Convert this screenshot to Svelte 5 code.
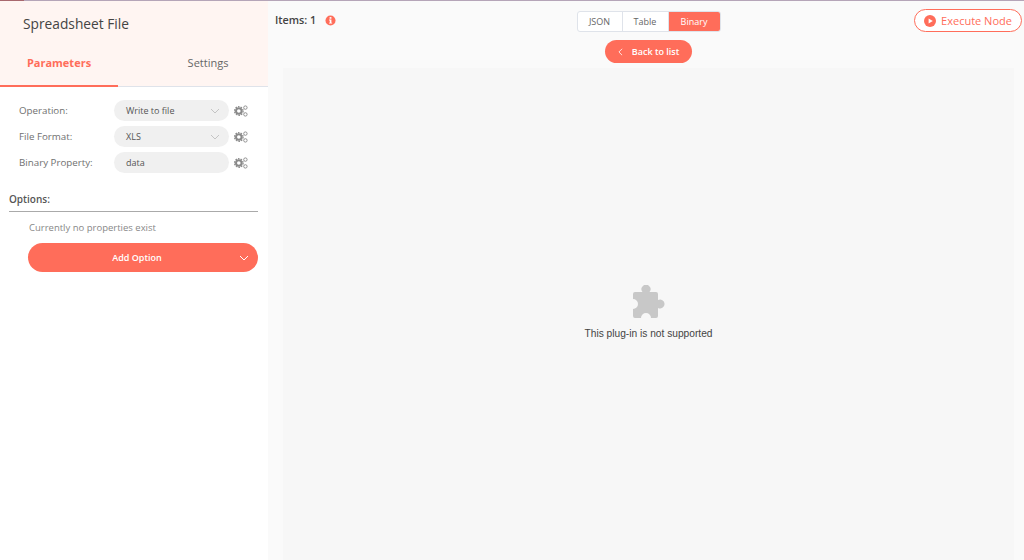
<script lang="ts">
	const params = [
		{ label: 'Operation:', value: 'Write to file', select: true },
		{ label: 'File Format:', value: 'XLS', select: true },
		{ label: 'Binary Property:', value: 'data', select: false }
	];
	const views = ['JSON', 'Table', 'Binary'];
	let view = $state('Binary');
	let tab = $state('Parameters');
</script>

{#snippet gears()}
	<svg class="gears" viewBox="0 0 14 12" width="14" height="12" aria-hidden="true">
		<circle cx="4.8" cy="6" r="2.8" fill="none" stroke="#8a8a8a" stroke-width="2" />
		<circle cx="4.8" cy="6" r="4.3" fill="none" stroke="#8a8a8a" stroke-width="1.2" stroke-dasharray="1.6 1.1" />
		<circle cx="11.4" cy="2.6" r="1.7" fill="none" stroke="#919191" stroke-width="1" />
		<circle cx="11.4" cy="9.4" r="1.7" fill="none" stroke="#919191" stroke-width="1" />
	</svg>
{/snippet}

<div class="page">
	<div class="topline"></div>
	<aside class="side">
		<header class="side-head">
			<h1>Spreadsheet File</h1>
			<nav class="tabs">
				{#each ['Parameters', 'Settings'] as t}
					<button class="tab" class:active={tab === t} onclick={() => (tab = t)}>{t}</button>
				{/each}
			</nav>
		</header>

		<div class="params">
			{#each params as p}
				<div class="param">
					<span class="param-label">{p.label}</span>
					<div class="field">
						<span>{p.value}</span>
						{#if p.select}
							<svg viewBox="0 0 10 6" width="10" height="6" aria-hidden="true">
								<path d="M1 1l4 4 4-4" fill="none" stroke="#c4c4c4" stroke-width="1" />
							</svg>
						{/if}
					</div>
					{@render gears()}
				</div>
			{/each}
		</div>

		<section class="options">
			<div class="options-title">Options:</div>
			<div class="options-body">
				<p>Currently no properties exist</p>
				<button class="add">
					<span>Add Option</span>
					<svg viewBox="0 0 10 6" width="10" height="6" aria-hidden="true">
						<path d="M1 1l4 4 4-4" fill="none" stroke="#fff" stroke-width="1" />
					</svg>
				</button>
			</div>
		</section>
	</aside>

	<main class="output">
		<div class="bar">
			<div class="items">
				<span>Items: 1</span>
				<svg viewBox="0 0 12 12" width="11" height="11" aria-hidden="true">
					<circle cx="6" cy="6" r="5.5" fill="#ff6d5a" />
					<rect x="5" y="2.3" width="2" height="1.8" fill="#fff" />
					<path d="M4.4 5h2.6v3.4h.8v1H4.4v-1h.8V6h-.8z" fill="#fff" />
				</svg>
			</div>
			<div class="center">
				<div class="switch">
					{#each views as v}
						<button class:on={view === v} onclick={() => (view = v)}>{v}</button>
					{/each}
				</div>
				<button class="back">
					<svg viewBox="0 0 6 10" width="5" height="8" aria-hidden="true">
						<path d="M5 1L1 5l4 4" fill="none" stroke="#fff" stroke-width="1" />
					</svg>
					<span>Back to list</span>
				</button>
			</div>
			<div class="right">
				<button class="execute">
					<svg viewBox="0 0 12 12" width="12" height="12" aria-hidden="true">
						<circle cx="6" cy="6" r="6" fill="#ff6d5a" />
						<path d="M4.6 3.4L8.8 6 4.6 8.6z" fill="#fff" />
					</svg>
					<span>Execute Node</span>
				</button>
			</div>
		</div>

		<div class="viewer">
			<svg class="puzzle" viewBox="0 0 34 34" width="34" height="34" aria-hidden="true">
				<path
					fill="#c8c8c8"
					d="M3 7H10.500A4.500 4.500 0 1 1 17.500 7H24a2 2 0 0 1 2 2V15A4.500 4.500 0 1 1 26 23V31a2 2 0 0 1-2 2H19A5 5 0 0 0 9 33H3a2 2 0 0 1-2-2V24A5 5 0 0 0 1 14V9a2 2 0 0 1 2-2z"
				/>
			</svg>
			<p>This plug-in is not supported</p>
		</div>
	</main>
</div>

<style>
	:global(body) {
		margin: 0;
		font-family: 'Open Sans', sans-serif;
		color: #555;
	}

	button {
		font-family: inherit;
		cursor: pointer;
	}

	.page {
		display: grid;
		grid-template-columns: 268px 1fr;
		grid-template-rows: 1px 1fr;
		width: 1024px;
		height: 560px;
		overflow: hidden;
	}

	.topline {
		grid-column: 1 / -1;
		background: linear-gradient(90deg, #a8686e 24px, #b5a5b8 24px);
	}

	.side {
		background: #fff;
	}

	.side-head {
		background: #fff5f2;
		height: 86px;
		display: flex;
		flex-direction: column;
		box-sizing: border-box;
	}

	h1 {
		margin: 0;
		padding: 13px 0 0 23px;
		font-size: 13.750px;
		line-height: 20px;
		font-weight: 400;
		color: #444;
	}

	.tabs {
		margin-top: auto;
		display: flex;
		border-bottom: 1px solid #dfe3ea;
		height: 40px;
		box-sizing: border-box;
	}

	.tab {
		flex: 1;
		background: none;
		border: 0;
		border-bottom: 2px solid transparent;
		margin-bottom: -1px;
		padding: 0 0 8px 30px;
		font-size: 11px;
		color: #666;
	}

	.tab:first-child {
		flex: none;
		width: 118px;
		padding-left: 0;
	}

	.tab.active {
		color: #ff6d5a;
		font-weight: 700;
		border-bottom-color: #ff6d5a;
	}

	.params {
		padding: 13px 0 0 19px;
		display: flex;
		flex-direction: column;
		gap: 5px;
	}

	.param {
		display: flex;
		align-items: center;
	}

	.param-label {
		width: 95px;
		flex: none;
		font-size: 9.750px;
		color: #707070;
	}

	.field {
		width: 115px;
		height: 21px;
		box-sizing: border-box;
		padding: 0 9px 0 12px;
		border-radius: 11px;
		background: #f0f0f0;
		display: flex;
		align-items: center;
		justify-content: space-between;
		font-size: 9px;
		color: #555;
	}

	.gears {
		margin-left: 5px;
	}

	.options {
		margin: 19px 10px 0 9px;
	}

	.options-title {
		font-size: 10px;
		font-weight: 600;
		line-height: 14px;
		padding-bottom: 5px;
		border-bottom: 1px solid #aaa;
		color: #555;
	}

	.options-body {
		padding-left: 19px;
	}

	.options-body p {
		margin: 0;
		padding: 9px 0 0 1px;
		font-size: 9.500px;
		line-height: 14px;
		color: #888;
	}

	.add {
		margin-top: 8px;
		width: 100%;
		height: 29px;
		border: 0;
		border-radius: 15px;
		background: #ff6d5a;
		color: #fff;
		font-size: 9px;
		font-weight: 600;
		position: relative;
		padding: 0 12px 0 0;
	}

	.add svg {
		position: absolute;
		right: 9px;
		top: 12px;
	}

	.output {
		min-width: 0;
		background: #fafafa;
		display: flex;
		flex-direction: column;
	}

	.bar {
		height: 67px;
		flex: none;
		display: grid;
		grid-template-columns: 1fr auto 1fr;
		align-items: start;
	}

	.items {
		display: flex;
		align-items: center;
		gap: 9px;
		padding: 12px 0 0 7px;
		font-size: 10.800px;
		font-weight: 600;
		line-height: 14px;
		color: #444;
	}

	.center {
		display: flex;
		flex-direction: column;
		align-items: center;
		padding-top: 10px;
		gap: 8px;
		margin-left: 5px;
	}

	.switch {
		display: flex;
		height: 21px;
		border: 1px solid #dfe3ea;
		border-radius: 3px;
		background: #fff;
		overflow: hidden;
		box-sizing: border-box;
	}

	.switch button {
		border: 0;
		border-right: 1px solid #dfe3ea;
		background: none;
		padding: 0;
		width: 46px;
		font-size: 9px;
		color: #666;
	}

	.switch button:first-child {
		width: 45px;
	}

	.switch button:last-child {
		border-right: 0;
		width: 51px;
	}

	.switch button.on {
		background: #ff6d5a;
		color: #fff;
	}

	.back {
		height: 23px;
		width: 87px;
		border: 0;
		border-radius: 12px;
		background: #ff6d5a;
		color: #fff;
		font-size: 9px;
		font-weight: 600;
		display: flex;
		align-items: center;
		justify-content: center;
		gap: 9px;
		padding: 0;
	}

	.right {
		display: flex;
		justify-content: flex-end;
		padding: 8px 2px 0 0;
	}

	.execute {
		height: 23px;
		width: 108px;
		box-sizing: border-box;
		border: 1px solid #ff6d5a;
		border-radius: 12px;
		background: #fff;
		color: #ff6d5a;
		font-size: 11px;
		display: flex;
		align-items: center;
		justify-content: center;
		gap: 5px;
		padding: 0;
	}

	.viewer {
		flex: 1;
		margin: 0 10px 0 15px;
		background: #f7f7f7;
		display: flex;
		flex-direction: column;
		align-items: center;
		padding-top: 217px;
	}

	.viewer p {
		margin: 8px 0 0;
		font-family: 'Liberation Sans', Arial, sans-serif;
		font-size: 10.200px;
		line-height: 14px;
		color: #444;
	}
</style>
